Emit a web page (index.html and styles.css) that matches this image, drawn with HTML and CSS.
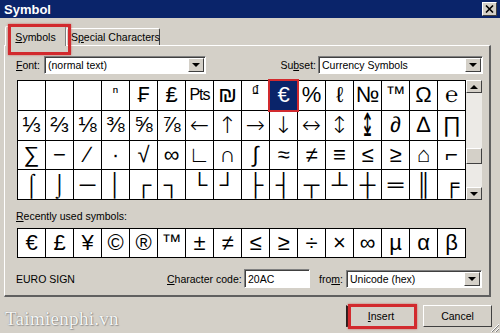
FILE: index.html
```html
<!DOCTYPE html>
<html>
<head>
<meta charset="utf-8">
<link rel="stylesheet" href="styles.css">
</head>
<body>
<div class="window">
  <div class="titlebar">
    <span class="title">Symbol</span>
    <span class="close"><svg width="9" height="8" viewBox="0 0 9 8"><path d="M1 0.5 L8 7.5 M8 0.5 L1 7.5" stroke="#000" stroke-width="1.6"/></svg></span>
  </div>
  <div class="tabs">
    <div class="tab active"><span><u>S</u>ymbols</span></div>
    <div class="tab">S<u>p</u>ecial Characters</div>
  </div>
  <div class="panel">
    <div class="font-row">
      <span class="lbl-font"><u>F</u>ont:</span>
      <div class="select sel-font"><span class="val">(normal text)</span><span class="drop"><i></i></span></div>
      <span class="lbl-subset">Su<u>b</u>set:</span>
      <div class="select sel-subset"><span class="val">Currency Symbols</span><span class="drop"><i></i></span></div>
    </div>
    <div class="grid-wrap">
      <div class="charmap">
        <div class="c"></div><div class="c"></div><div class="c"></div><div class="c sm">ⁿ</div><div class="c">₣</div><div class="c">₤</div><div class="c pts">Pts</div><div class="c">₪</div><div class="c sm">₫</div><div class="c sel">€</div><div class="c">%</div><div class="c">ℓ</div><div class="c">№</div><div class="c tm">™</div><div class="c">Ω</div><div class="c">℮</div>
        <div class="c">⅓</div><div class="c">⅔</div><div class="c">⅛</div><div class="c">⅜</div><div class="c">⅝</div><div class="c">⅞</div><div class="c ar">←</div><div class="c ar">↑</div><div class="c ar">→</div><div class="c ar">↓</div><div class="c ar">↔</div><div class="c ar">↕</div><div class="c ub"><span>↨</span></div><div class="c">∂</div><div class="c">∆</div><div class="c">∏</div>
        <div class="c">∑</div><div class="c">−</div><div class="c">∕</div><div class="c">∙</div><div class="c">√</div><div class="c">∞</div><div class="c">∟</div><div class="c">∩</div><div class="c">∫</div><div class="c">≈</div><div class="c">≠</div><div class="c">≡</div><div class="c">≤</div><div class="c">≥</div><div class="c">⌂</div><div class="c">⌐</div>
        <div class="c">⌠</div><div class="c">⌡</div><div class="c">─</div><div class="c">│</div><div class="c">┌</div><div class="c">┐</div><div class="c">└</div><div class="c">┘</div><div class="c">├</div><div class="c">┤</div><div class="c">┬</div><div class="c">┴</div><div class="c">┼</div><div class="c">═</div><div class="c">║</div><div class="c">╒</div>
      </div>
      <div class="scrollbar">
        <div class="sbtn"><i class="up"></i></div>
        <div class="track-top"></div>
        <div class="thumb"></div>
        <div class="track-bot"></div>
        <div class="sbtn"><i class="down"></i></div>
      </div>
    </div>
    <div class="recent-label"><u>R</u>ecently used symbols:</div>
    <div class="recent">
      <div class="c">€</div><div class="c">£</div><div class="c">¥</div><div class="c">©</div><div class="c">®</div><div class="c tm">™</div><div class="c">±</div><div class="c">≠</div><div class="c">≤</div><div class="c">≥</div><div class="c">÷</div><div class="c">×</div><div class="c">∞</div><div class="c">µ</div><div class="c">α</div><div class="c">β</div>
    </div>
    <div class="bottom-row">
      <span class="euro">EURO SIGN</span>
      <span class="lbl-code"><u>C</u>haracter code:</span>
      <div class="input">20AC</div>
      <span class="lbl-from">fro<u>m</u>:</span>
      <div class="select sel-from"><span class="val">Unicode (hex)</span><span class="drop"><i></i></span></div>
    </div>
  </div>
  <div class="buttons">
    <span class="watermark">Taimienphi.vn</span>
    <div class="btn insert"><span><u>I</u>nsert</span></div>
    <div class="btn cancel">Cancel</div>
    <span class="grip"><svg width="11" height="11" viewBox="0 0 11 11"><path d="M10 2 L2 10 M10 6 L6 10" stroke="#fff" stroke-width="1"/><path d="M10 3 L3 10 M10 7 L7 10" stroke="#808080" stroke-width="1"/></svg></span>
  </div>
</div>
</body>
</html>
```
FILE: styles.css
```css
* { box-sizing: border-box; }
html, body { margin: 0; padding: 0; }
body {
  width: 500px;
  height: 333px;
  overflow: hidden;
  background: #d4d0c8;
  font-family: "Liberation Sans", Arial, sans-serif;
  font-size: 10.5px;
  color: #000;
}
.window {
  width: 500px;
  height: 333px;
  display: flex;
  flex-direction: column;
  position: relative;
}
.titlebar {
  height: 18px;
  background: #0a246a;
  display: flex;
  align-items: center;
  justify-content: space-between;
  padding: 0 3px 0 4px;
}
.title {
  color: #fff;
  font-weight: bold;
  font-size: 13px;
}
.close {
  width: 15px;
  height: 14px;
  background: #d4d0c8;
  border: 1px solid;
  border-color: #fff #404040 #404040 #fff;
  display: flex;
  align-items: center;
  justify-content: center;
}
.tabs {
  height: 27px;
  display: flex;
  align-items: flex-end;
  padding-left: 5px;
  position: relative;
  z-index: 1;
}
.tab {
  height: 17px;
  width: 94px;
  padding: 0 0 0 4px;
  border: 1px solid;
  border-bottom: none;
  border-color: #fff #404040 transparent #fff;
  border-radius: 2px 2px 0 0;
  display: flex;
  align-items: center;
  white-space: nowrap;
}
.tab.active {
  width: 61px;
  height: 20px;
  margin-bottom: -1px;
  padding: 0;
  background: #d4d0c8;
  justify-content: center;
  position: relative;
  border-right-color: #808080;
}
.tab.active::after {
  content: "";
  position: absolute;
  left: 2px;
  top: -3px;
  width: 57px;
  height: 25px;
  border: 3px solid #d22a2e;
  box-shadow: 0 0 2px rgba(200, 30, 30, 0.6);
}
.panel {
  margin-left: 4px;
  width: 487px;
  height: 252px;
  border-top: 1px solid #fff;
  border-left: 1px solid #fff;
  border-right: 2px solid #606060;
  border-bottom: 2px solid #606060;
  padding: 10px 6px 0 12px;
  display: flex;
  flex-direction: column;
}
.font-row {
  display: flex;
  align-items: center;
  height: 18px;
}
.lbl-font {
  width: 28px;
  margin-left: -1px;
}
.lbl-subset {
  margin-left: auto;
  margin-right: 2px;
}
.select {
  height: 18px;
  background: #fff;
  border: 1px solid;
  border-color: #808080 #fff #fff #808080;
  box-shadow: inset 1px 1px 0 #404040;
  display: flex;
  align-items: center;
  justify-content: space-between;
  padding: 1px 1px 1px 3px;
}
.sel-font { width: 162px; }
.sel-subset { width: 165px; }
.sel-from { width: 136px; }
.drop {
  width: 16px;
  height: 14px;
  background: #d4d0c8;
  border: 1px solid;
  border-color: #fff #404040 #404040 #fff;
  display: flex;
  align-items: center;
  justify-content: center;
}
.drop i {
  width: 0;
  height: 0;
  border-left: 4px solid transparent;
  border-right: 4px solid transparent;
  border-top: 4px solid #000;
}
.grid-wrap {
  margin-top: 6px;
  display: flex;
}
.charmap {
  display: grid;
  grid-template-columns: repeat(16, 27px);
  grid-template-rows: repeat(4, 28.75px);
  gap: 1px;
  padding: 1px;
  background: #000;
  width: 449px;
}
.c {
  background: #fff;
  display: flex;
  align-items: center;
  justify-content: center;
  font-family: "Liberation Sans", "DejaVu Sans", sans-serif;
  font-size: 22px;
  line-height: 1;
  overflow: hidden;
}
.c.sm { font-size: 16px; align-items: flex-start; padding-top: 3px; }
.c.pts { font-size: 16px; letter-spacing: -1px; }
.c.tm { font-size: 20px; align-items: flex-start; padding-top: 2px; }
.c.ar { font-family: "DejaVu Sans", sans-serif; font-size: 23px; font-weight: 300; }
.c.ub { font-family: "DejaVu Sans", sans-serif; font-size: 32px; overflow: visible; }
.c.ub span { display: inline-block; line-height: 20px; transform: scaleX(0.5); }
.c.sel {
  background: #0a246a;
  color: #fff;
  position: relative;
  overflow: visible;
}
.c.sel::after {
  content: "";
  position: absolute;
  left: -2px;
  top: -2px;
  right: -2px;
  bottom: -2px;
  border: 2px solid #d22a2e;
}
.scrollbar {
  width: 16px;
  display: flex;
  flex-direction: column;
  background: #eceae6;
}
.sbtn {
  height: 13px;
  background: #d4d0c8;
  border: 1px solid;
  border-color: #fff #404040 #404040 #fff;
  display: flex;
  align-items: center;
  justify-content: center;
}
.sbtn i {
  width: 0;
  height: 0;
  border-left: 4px solid transparent;
  border-right: 4px solid transparent;
}
.sbtn i.up { border-bottom: 4px solid #000; }
.sbtn i.down { border-top: 4px solid #000; }
.track-top { height: 55px; }
.thumb {
  height: 16px;
  background: #d4d0c8;
  border: 1px solid;
  border-color: #fff #404040 #404040 #fff;
}
.track-bot { flex: 1; }
.recent-label {
  margin-top: 10px;
  line-height: 13px;
  margin-left: -1px;
}
.recent {
  margin-top: 5px;
  display: grid;
  grid-template-columns: repeat(16, 27px);
  grid-template-rows: 28px;
  gap: 1px;
  padding: 1px;
  background: #000;
  width: 449px;
}
.bottom-row {
  margin-top: 11px;
  display: flex;
  align-items: center;
  height: 19px;
}
.euro { width: 151px; margin-left: -1px; }
.lbl-code { width: 77px; }
.input {
  width: 66px;
  height: 19px;
  background: #fff;
  border: 1px solid;
  border-color: #808080 #fff #fff #808080;
  box-shadow: inset 1px 1px 0 #404040;
  padding: 0 3px;
  display: flex;
  align-items: center;
}
.lbl-from { width: 27px; margin-left: 9px; }
.buttons {
  flex: 1;
  display: flex;
  align-items: flex-start;
  padding: 8px 8px 0 5px;
  position: relative;
}
.watermark {
  margin-right: auto;
  margin-top: 3px;
  font-family: "Liberation Serif", serif;
  font-size: 19px;
  color: #f6f6f4;
  text-shadow: 0 0 1px #7a7a7a, 1px 1px 1px #9a9a9a;
  letter-spacing: 0.3px;
}
.btn {
  width: 69px;
  height: 22px;
  border: 1px solid;
  border-color: #fff #404040 #404040 #fff;
  display: flex;
  align-items: center;
  justify-content: center;
}
.btn.insert {
  position: relative;
  border-left: 2px solid #202020;
}
.btn.insert::after {
  content: "";
  position: absolute;
  left: 0px;
  top: -2px;
  right: -3px;
  bottom: -3px;
  border: 3px solid #d22a2e;
  box-shadow: 0 0 2px rgba(200, 30, 30, 0.6);
}
.btn.cancel { margin-left: 8px; }
.grip {
  position: absolute;
  right: 0;
  bottom: 0;
  width: 11px;
  height: 11px;
}
```
